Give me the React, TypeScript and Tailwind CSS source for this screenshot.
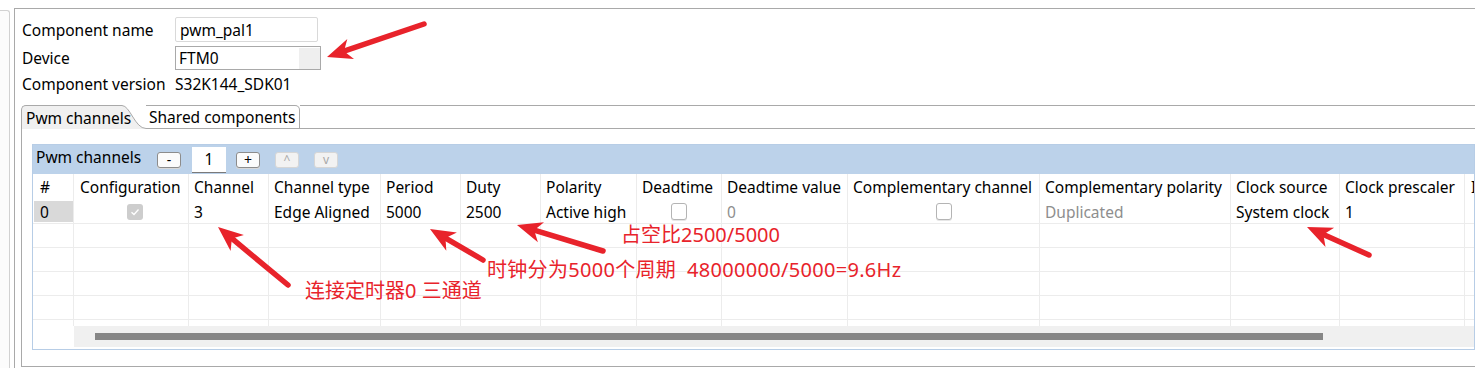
import React from 'react';

type Col = { label: string; w: number; pl?: number };

const COLS: Col[] = [
  { label: '#', w: 41, pl: 7 },
  { label: 'Configuration', w: 115, pl: 6 },
  { label: 'Channel', w: 80 },
  { label: 'Channel type', w: 112 },
  { label: 'Period', w: 80 },
  { label: 'Duty', w: 80 },
  { label: 'Polarity', w: 96 },
  { label: 'Deadtime', w: 85 },
  { label: 'Deadtime value', w: 126 },
  { label: 'Complementary channel', w: 192 },
  { label: 'Complementary polarity', w: 191 },
  { label: 'Clock source', w: 109 },
  { label: 'Clock prescaler', w: 125 },
];

const RED = '#e8232b';

// tail -> tip
const ARROWS: Array<[number, number, number, number]> = [
  [424, 24, 327, 57],
  [288, 285, 218, 227],
  [483, 260, 430, 229],
  [603, 251, 517, 225],
  [1369, 255, 1307, 227],
];

function arrowShape(tx: number, ty: number, px: number, py: number) {
  const dx = px - tx;
  const dy = py - ty;
  const len = Math.hypot(dx, dy);
  const ux = dx / len;
  const uy = dy / len;
  const nx = -uy;
  const ny = ux;
  const L = 25;
  const W = 10.5;
  const bx = px - ux * L;
  const by = py - uy * L;
  const mx = px - ux * L * 0.72;
  const my = py - uy * L * 0.72;
  const pts = [
    [px, py],
    [bx + nx * W, by + ny * W],
    [mx, my],
    [bx - nx * W, by - ny * W],
  ]
    .map((p) => p[0].toFixed(1) + ',' + p[1].toFixed(1))
    .join(' ');
  return { pts, mx, my };
}

function Check({ checked }: { checked: boolean }) {
  if (checked) {
    return (
      <div className="flex h-[16px] w-[16px] items-center justify-center rounded-[3px] bg-[#cdcdcd]">
        <svg width="10" height="8" viewBox="0 0 10 8">
          <path d="M1.5 4.2 L4 6.5 L8.5 1.5" fill="none" stroke="#ffffff" strokeWidth="1.3" />
        </svg>
      </div>
    );
  }
  return <div className="h-[17px] w-[16px] rounded-[3px] border border-[#b4b4b4] bg-white shadow-[0_1px_0_#e6e6e6]" />;
}

function BarButton({ label, disabled }: { label: string; disabled?: boolean }) {
  return (
    <div
      className={
        disabled
          ? 'flex h-[16px] w-[24px] items-center justify-center rounded-[3px] border border-[#d6d6d6] bg-[#f2f2f2] text-[12px] leading-none text-[#a8a8a8]'
          : 'flex h-[16px] w-[24px] items-center justify-center rounded-[3px] border border-[#8c8c8c] bg-[#fbfbfb] text-[14px] leading-none text-black shadow-[0_1px_0_#d8d8d8]'
      }
    >
      {label}
    </div>
  );
}

function Row({ children, first }: { children?: React.ReactNode; first?: boolean }) {
  return (
    <div className="flex h-[24px] border-b border-[#ececec]">
      {COLS.map((c, i) => (
        <div
          key={c.label}
          className={
            i === 0 && first
              ? 'flex shrink-0 items-center border-r border-[#ececec] py-px pl-px'
              : 'flex shrink-0 items-center border-r border-[#ececec]'
          }
          style={{ width: c.w }}
        >
          {first ? (children as React.ReactNode[])[i] : null}
        </div>
      ))}
      <div className="min-w-0 flex-1 overflow-hidden" />
    </div>
  );
}

export default function App() {
  const cellText = (t: string, pl = 5, gray = false) => (
    <span
      className={gray ? 'whitespace-nowrap pt-[2px] text-[#8e8e8e]' : 'whitespace-nowrap pt-[2px]'}
      style={{ paddingLeft: pl }}
    >
      {t}
    </span>
  );

  const firstRow: React.ReactNode[] = [
    <div key="i" className="flex h-full w-full items-center bg-[#d9d9d9] pl-[6px] pt-[2px]">0</div>,
    <div key="c" className="pl-[53px]"><Check checked /></div>,
    cellText('3'),
    cellText('Edge Aligned'),
    cellText('5000'),
    cellText('2500'),
    cellText('Active high'),
    <div key="d" className="pl-[34px]"><Check checked={false} /></div>,
    cellText('0', 5, true),
    <div key="cc" className="pl-[88px]"><Check checked={false} /></div>,
    cellText('Duplicated', 5, true),
    cellText('System clock'),
    cellText('1'),
  ];

  return (
    <div className="relative h-[368px] w-[1475px] overflow-hidden bg-white font-['Noto_Sans','Noto_Sans_CJK_SC',sans-serif] text-[15.5px] text-black">
      <div className="flex h-full">
        {/* left neighbour view */}
        <div className="mt-[10px] w-[10px] shrink-0 rounded-tr-[3px] border-r border-t border-[#d2d2d2] bg-[#fcfcfc]" />

        {/* editor frame */}
        <div className="ml-[4px] mt-[8px] min-w-0 flex-1 border-l border-t border-[#a9a9a9] pl-[6px]">
          {/* form */}
          <div className="pl-px pt-[8px]">
            <div className="flex h-[25px] items-center">
              <div className="w-[153px] pt-[3px]">Component name</div>
              <div className="flex h-[25px] w-[143px] items-center rounded-[2px] border border-[#d9d9d9] pl-[4px] pt-[2px]">pwm_pal1</div>
            </div>
            <div className="mt-[4px] flex h-[24px] items-center">
              <div className="w-[153px] pt-[2px]">Device</div>
              <div className="flex h-[24px] w-[146px] items-center border border-[#a9a9a9] pl-[3px]">
                <span className="flex-1 pt-[2px]">FTM0</span>
                <div className="my-px h-[21px] w-[21px] bg-[#efefef]" />
              </div>
            </div>
            <div className="mt-[2px] flex h-[24px] items-center pt-[2px]">
              <div className="w-[153px]">Component version</div>
              <div>S32K144_SDK01</div>
            </div>
          </div>

          {/* tab strip */}
          <div className="mt-[9px] flex h-[24px]">
            <div className="relative z-[1] flex h-[24px] w-[101px] shrink-0 items-center overflow-visible rounded-tl-[5px] border-l border-t border-[#a9a9a9] bg-[#f0f0f0] pl-[4px] pt-[2px] whitespace-nowrap">
              Pwm channels
            </div>
            <svg width="24" height="24" viewBox="0 0 24 24" className="shrink-0">
              <path d="M0 0.5 C 8 0.5, 13 23.5, 24 23.5 L 24 24 L 0 24 Z" fill="#f0f0f0" />
              <path d="M0 0.5 C 8 0.5, 13 23.5, 24 23.5" fill="none" stroke="#a9a9a9" strokeWidth="1" />
            </svg>
            <div className="flex h-[24px] w-[154px] shrink-0 items-center rounded-tr-[5px] border-b border-r border-t border-[#a9a9a9] pl-[3px] pt-[2px] whitespace-nowrap">
              Shared components
            </div>
            <div className="flex-1 border-b border-t border-[#a9a9a9]" />
          </div>

          {/* tab panel */}
          <div className="border-b border-l border-[#a9a9a9] pb-[16px] pl-[10px] pt-[15px]">
            <div className="border border-[#b7cde6]">
              {/* group header */}
              <div className="flex h-[29px] items-center bg-[#bcd2ea]">
                <div className="w-[124px] shrink-0 pl-[3px] pb-[3px] whitespace-nowrap">Pwm channels</div>
                <BarButton label="-" />
                <div className="ml-[11px] flex h-[26px] w-[34px] items-center justify-center border-b border-[#7a7a7a] bg-white pt-[2px]">1</div>
                <div className="ml-[10px]"><BarButton label="+" /></div>
                <div className="ml-[15px]"><BarButton label="^" disabled /></div>
                <div className="ml-[15px]"><BarButton label="v" disabled /></div>
              </div>

              {/* column header */}
              <div className="flex h-[26px]">
                {COLS.map((c) => (
                  <div
                    key={c.label}
                    className="flex shrink-0 items-center border-r border-[#ececec] pt-[2px] whitespace-nowrap"
                    style={{ width: c.w, paddingLeft: c.pl ?? 5 }}
                  >
                    {c.label}
                  </div>
                ))}
                <div className="flex min-w-0 flex-1 items-center overflow-hidden whitespace-nowrap pl-[6px] pt-[2px]">Interrupt</div>
              </div>

              {/* rows */}
              <Row first>{firstRow}</Row>
              <Row />
              <Row />
              <Row />
              <Row />
              <div className="flex h-[6px]">
                {COLS.map((c) => (
                  <div key={c.label} className="shrink-0 border-r border-[#ececec]" style={{ width: c.w }} />
                ))}
              </div>

              {/* horizontal scrollbar */}
              <div className="ml-[41px] h-[21px] bg-[#f0f0f0] pl-[21px] pt-[7px]">
                <div className="h-[7px] w-[1228px] bg-[#868686]" />
              </div>
              <div className="h-[2px]" />
            </div>
          </div>
        </div>
      </div>

      {/* annotations */}
      <div className="pointer-events-none absolute inset-0 font-['Noto_Sans','Noto_Sans_CJK_SC',sans-serif] text-[20px] leading-[20px] text-[#e8232b]">
        <div className="absolute left-[621px] top-[225px] whitespace-nowrap">占空比2500/5000</div>
        <div className="absolute left-[487px] top-[260px] whitespace-pre tracking-[0.3px]">时钟分为5000个周期  48000000/5000=9.6Hz</div>
        <div className="absolute left-[305px] top-[281px] whitespace-pre">连接定时器0 三通道</div>
      </div>
      <svg className="pointer-events-none absolute left-0 top-0" width="1475" height="368">
        {ARROWS.map(([tx, ty, px, py], i) => {
          const a = arrowShape(tx, ty, px, py);
          return (
            <g key={i}>
              <line x1={tx} y1={ty} x2={a.mx} y2={a.my} stroke={RED} strokeWidth="5.5" strokeLinecap="round" />
              <polygon points={a.pts} fill={RED} />
            </g>
          );
        })}
      </svg>
    </div>
  );
}
